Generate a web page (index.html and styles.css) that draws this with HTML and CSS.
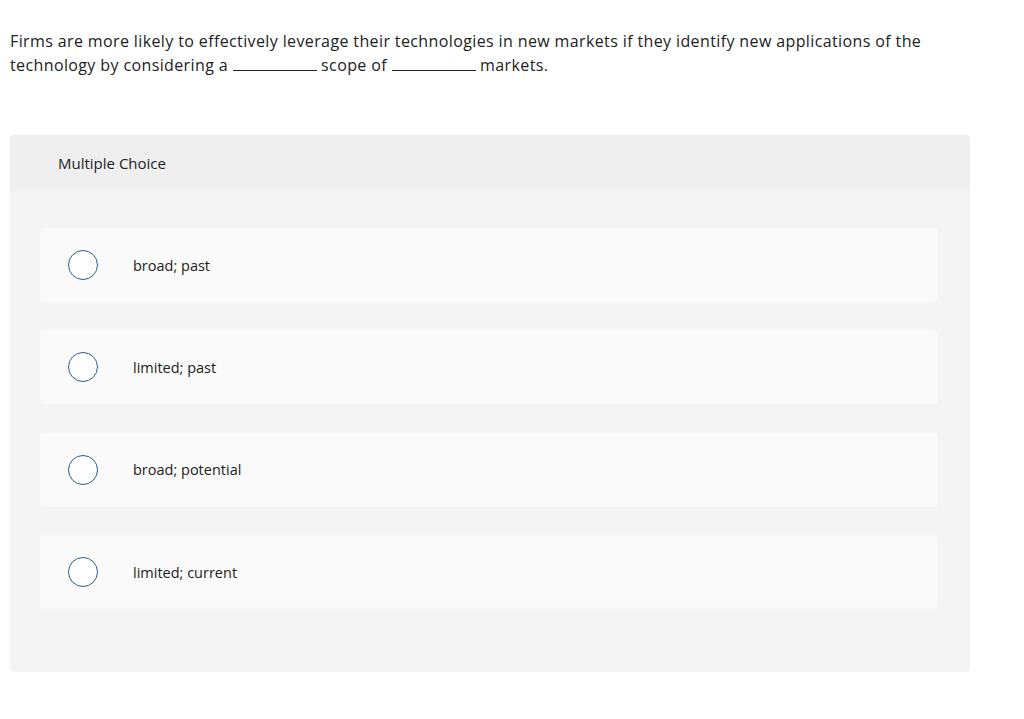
FILE: index.html
```html
<!DOCTYPE html>
<html>
<head>
<meta charset="utf-8">
<link rel="stylesheet" href="styles.css">
</head>
<body>
<div class="page">
  <p class="question"><span class="line">Firms are more likely to effectively leverage their technologies in new markets if they identify new applications of the</span><br><span class="line">technology by considering a</span> <span class="blank"></span> <span class="line">scope of</span> <span class="blank"></span> <span class="line">markets.</span></p>
  <div class="panel">
    <div class="panel-head">Multiple Choice</div>
    <div class="panel-body">
      <div class="option"><span class="radio"></span><span class="label">broad; past</span></div>
      <div class="option"><span class="radio"></span><span class="label">limited; past</span></div>
      <div class="option"><span class="radio"></span><span class="label">broad; potential</span></div>
      <div class="option"><span class="radio"></span><span class="label">limited; current</span></div>
    </div>
  </div>
</div>
</body>
</html>
```
FILE: styles.css
```css
html, body {
  margin: 0;
  padding: 0;
  background: #ffffff;
}
body {
  font-family: "Open Sans", "Lato", sans-serif;
  color: #222222;
}
.page {
  padding: 29px 10px 0 10px;
  width: 960px;
}
.question {
  margin: 0;
  font-size: 16px;
  letter-spacing: 0.38px;
  line-height: 24px;
  width: 950px;
}
.blank {
  display: inline-block;
  width: 84px;
  height: 10px;
  border-bottom: 1px solid #222;
  vertical-align: baseline;
}
.panel {
  margin-top: 58px;
  border-radius: 4px;
  background: #f4f4f4;
  overflow: hidden;
}
.panel-head {
  background: #efefef;
  height: 56px;
  padding-left: 48px;
  font-size: 15px;
  line-height: 56px;
  color: #222;
}
.panel-body {
  padding: 37px 32px 63px 30px;
  display: flex;
  flex-direction: column;
  gap: 28.4px;
}
.option {
  height: 74px;
  background: #fafafa;
  border-radius: 4px;
  display: flex;
  align-items: center;
  padding-left: 28px;
}
.radio {
  width: 28px;
  height: 28px;
  border: 1.5px solid #2a5d91;
  border-radius: 50%;
  background: #ffffff;
  flex: none;
}
.label {
  margin-left: 35px;
  font-size: 14.5px;
  color: #222;
}
```
